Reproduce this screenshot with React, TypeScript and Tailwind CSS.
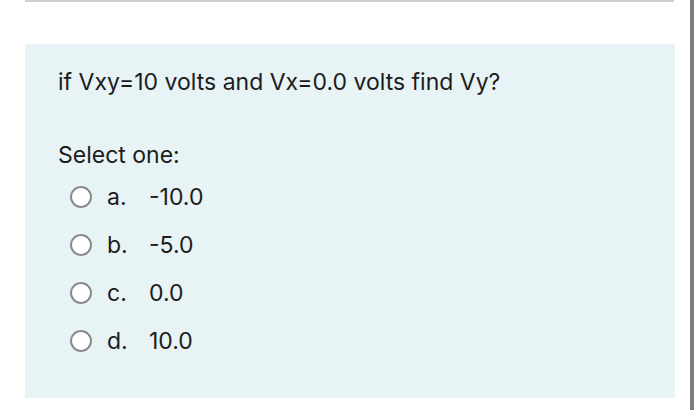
import React from "react";

const options = [
  { l: "a.", v: "-10.0" },
  { l: "b.", v: "-5.0" },
  { l: "c.", v: "0.0" },
  { l: "d.", v: "10.0" },
];

export default function App() {
  return (
    <div className="relative w-[700px] h-[410px] bg-white overflow-hidden" style={{ fontFamily: 'Inter, "Liberation Sans", Arial, sans-serif' }}>
      <div className="absolute right-[6px] top-0 h-full w-[4px] bg-[#7d7d7d]" />
      <div className="ml-[25px] w-[649px] h-[2px] bg-[#cfcfd3]" />
      <div className="ml-[25px] mt-[42px] w-[650px] h-[354px] bg-[#e7f3f5] pl-[33px] pt-[24px] text-[#1c1c1c]">
        <div className="text-[23px] leading-[28px]">if Vxy=10 volts and Vx=0.0 volts find Vy?</div>
        <div className="mt-[45px] text-[23px] leading-[28px]">Select one:</div>
        <div className="mt-[14px] flex flex-col gap-[20px] pl-[12px]">
          {options.map((o) => (
            <div key={o.l} className="flex items-center h-[28px] text-[23px]">
              <div className="w-[22px] h-[22px] rounded-full border-2 border-[#8c8c8c] bg-white" />
              <span className="ml-[15px] w-[42px]">{o.l}</span>
              <span>{o.v}</span>
            </div>
          ))}
        </div>
      </div>
    </div>
  );
}
